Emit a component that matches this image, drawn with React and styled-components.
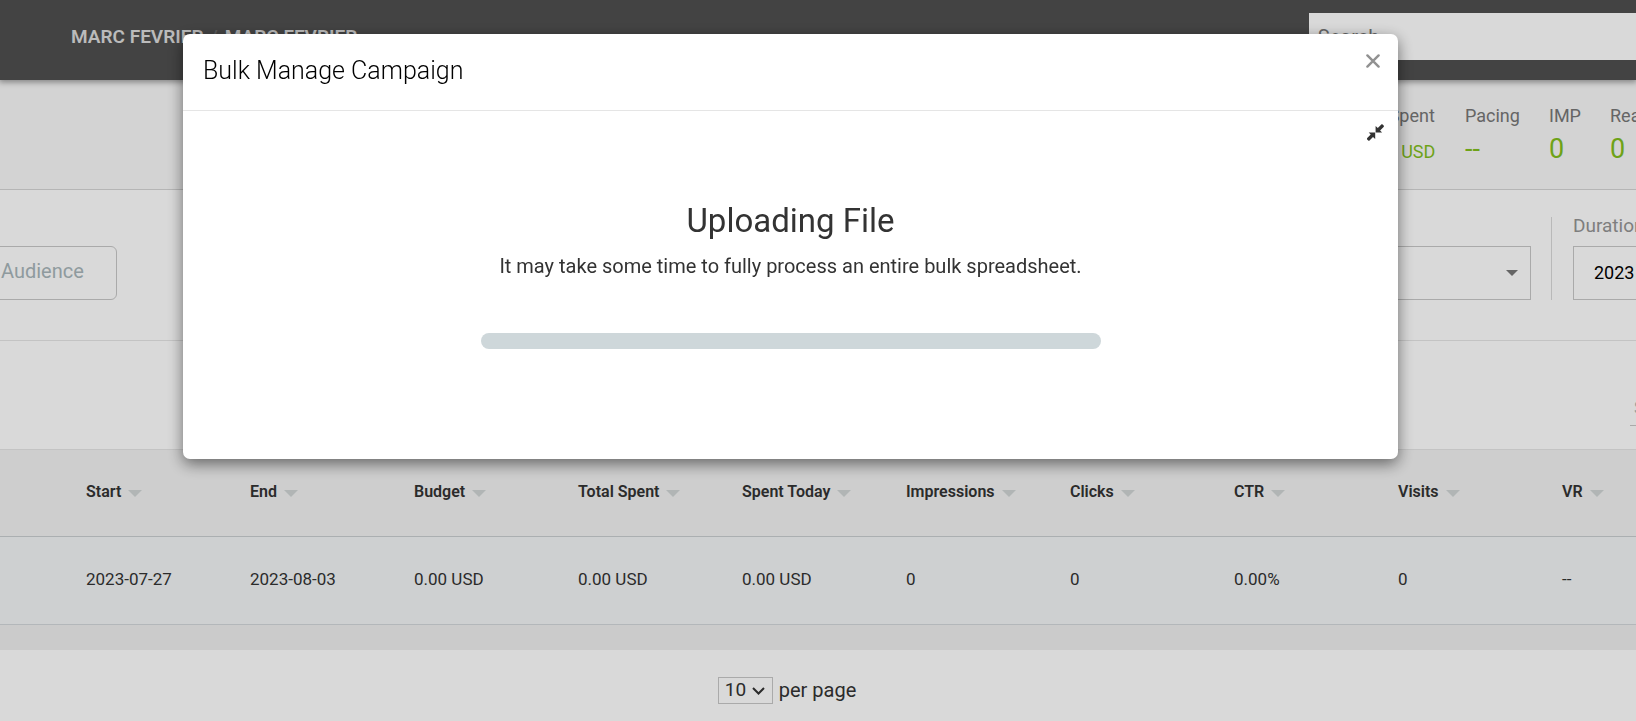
import { useState } from "react";
import styled, { createGlobalStyle } from "styled-components";

const GlobalStyle = createGlobalStyle`
  * {
    box-sizing: border-box;
  }

  body {
    margin: 0;
    background: #fff;
    color: #333;
    font-family: Roboto, "Liberation Sans", sans-serif;
    font-size: 20px;
    line-height: 24px;
  }

  button, input, select {
    font: inherit;
    color: inherit;
  }
`

const Page = styled.div`
  min-height: 100vh;
  overflow: hidden;
`

const TopBar = styled.header`
  display: flex;
  justify-content: space-between;
  align-items: flex-start;
  height: 80px;
  padding-top: 13px;
  position: relative;
  background: #4f4f4f;
  box-shadow: 0 1px 6px 1px rgba(0, 0, 0, 0.4);
`

const Breadcrumb = styled.nav`
  display: flex;
  gap: 7px;
  padding: 12px 0 0 71px;
  font-size: 19px;
  font-weight: 600;
  color: #6a6a6a;

  a {
    color: #dcdcdc;
    text-decoration: none;
  }
`

const TopSearch = styled.input`
  flex: 0 0 20%;
  height: 47px;
  padding: 0 9px;
  border: 0;
  border-radius: 0;
  background: #fff;

  &::placeholder {
    color: #777;
    opacity: 1;
  }
`

const StatsBar = styled.section`
  display: flex;
  justify-content: flex-end;
  height: 110px;
  padding-top: 24px;
  border-bottom: 1px solid #d5d5d5;
  background: #f8f8f8;
`

const Stat = styled.div`
  flex: 0 0 ${({ $width }) => $width}px;
  min-width: 0;
  white-space: nowrap;
`

const StatLabel = styled.div`
  font-size: 18px;
  color: #777;
`

const StatValue = styled.div`
  margin-top: 6px;
  font-size: 27px;
  line-height: 30px;
  color: #82bf1c;

  small {
    font-size: 18px;
  }
`

const Filters = styled.section`
  display: flex;
  align-items: flex-end;
  height: 151px;
  padding-bottom: 40px;
  border-bottom: 1px solid #e6e6e6;
`

const AudienceButton = styled.button`
  height: 54px;
  margin-left: -32px;
  padding: 0 32px 4px;
  border: 1px solid #c8c8c8;
  border-radius: 6px;
  background: #fff;
  color: #a8b6ba;
`

const FilterSelect = styled.div`
  width: 240px;
  margin-left: auto;
  position: relative;

  select {
    width: 100%;
    height: 54px;
    appearance: none;
    border: 1px solid #c8c8c8;
    border-radius: 0;
    background: #fff;
  }
`

const Caret = styled.span`
  display: inline-block;
  border: ${({ $size }) => $size}px solid transparent;
  border-top-color: ${({ $color }) => $color};
  border-bottom: 0;
`

const SelectCaret = styled(Caret)`
  position: absolute;
  right: 13px;
  top: 24px;
`

const Duration = styled.div`
  flex: none;
  width: 85px;
  margin-left: 20px;
  padding-left: 21px;
  border-left: 1px solid #dadada;
  white-space: nowrap;

  label {
    display: block;
    height: 29px;
    line-height: 18px;
    font-size: 19px;
    color: #959595;
  }

  input {
    display: block;
    width: 260px;
    height: 54px;
    padding: 0 20px 2px;
    border: 1px solid #c8c8c8;
    background: #fff;
    color: #000;
    font-size: 18px;
  }
`

const ListTools = styled.section`
  display: flex;
  justify-content: flex-end;
  align-items: flex-end;
  height: 109px;
  padding-bottom: 23px;
  border-bottom: 1px solid #e6e6e6;
`

const ListSearch = styled.input`
  flex: none;
  width: 200px;
  height: 36px;
  margin-right: -194px;
  padding: 0 4px;
  border: 0;
  border-bottom: 1px solid #c8c8c8;
  background: transparent;
  font-size: 18px;

  &::placeholder {
    color: #a8b6ba;
  }
`

const TableWrap = styled.div`
  overflow: hidden;
  padding-bottom: 25px;
  background: #efefef;
`

const Table = styled.table`
  width: 1706px;
  table-layout: fixed;
  border-collapse: collapse;
  text-align: left;

  th, td {
    padding: 0 0 2px 20px;
    white-space: nowrap;
  }

  th {
    height: 86px;
    font-size: 16px;
    font-weight: 600;
    background: #f2f2f2;
    border-bottom: 1px solid #c9ced0;
  }

  td {
    height: 88px;
    font-size: 17px;
    background: #f2f5f6;
    border-bottom: 1px solid #d3d8db;
  }

  th:first-child {
    width: 66px;
  }
`

const SortCaret = styled(Caret)`
  margin-left: 7px;
`

const Pagination = styled.label`
  display: flex;
  justify-content: center;
  align-items: center;
  gap: 6px;
  padding: 27px 62px 17px 0;
`

const PageSize = styled.span`
  position: relative;

  select {
    display: block;
    width: 55px;
    height: 27px;
    padding: 0 0 0 6px;
    appearance: none;
    border: 1px solid #c8c8c8;
    border-radius: 0;
    background: #fff;
    font-size: 19px;
  }

  svg {
    position: absolute;
    right: 8px;
    top: 10px;
    pointer-events: none;
  }
`

const Backdrop = styled.div`
  position: fixed;
  inset: 0;
  padding: 34px 238px 0 183px;
  background: rgba(0, 0, 0, 0.15);
`

const Dialog = styled.div`
  border-radius: 7px;
  background: #fff;
  box-shadow: 0 5px 15px rgba(0, 0, 0, 0.5);
`

const DialogHeader = styled.div`
  display: flex;
  justify-content: space-between;
  align-items: flex-start;
  height: 77px;
  padding: 20px 18px 0 20px;
  border-bottom: 1px solid #e5e5e5;

  h1 {
    margin: 0;
    font-size: 25px;
    line-height: 34px;
    font-weight: 300;
    color: #000;
  }
`

const IconButton = styled.button`
  display: block;
  padding: 0;
  border: 0;
  background: none;
  color: ${({ $color }) => $color};
  cursor: pointer;

  svg {
    display: block;
  }
`

const DialogBody = styled.div`
  display: flex;
  flex-direction: column;
  align-items: center;
  padding: 13px 14px 110px;
  text-align: center;

  ${IconButton} {
    align-self: flex-end;
  }

  h2 {
    margin: 60px 0 13px;
    font-size: 33px;
    line-height: 40px;
    font-weight: 400;
  }

  p {
    margin: 0 0 55px;
  }
`

const ProgressTrack = styled.div`
  width: 620px;
  max-width: 100%;
  height: 16px;
  border-radius: 8px;
  background: #ced7da;
  overflow: hidden;
`

const ProgressFill = styled.div`
  height: 100%;
  background: #82bf1c;
`

const stats = [
  { label: "Total Spent", value: "0.00", unit: "USD", width: 121 },
  { label: "Pacing", value: "--", width: 84 },
  { label: "IMP", value: "0", width: 61 },
  { label: "Reach", value: "0", width: 26 },
];

const columns = [
  { title: "Start", value: "2023-07-27" },
  { title: "End", value: "2023-08-03" },
  { title: "Budget", value: "0.00 USD" },
  { title: "Total Spent", value: "0.00 USD" },
  { title: "Spent Today", value: "0.00 USD" },
  { title: "Impressions", value: "0" },
  { title: "Clicks", value: "0" },
  { title: "CTR", value: "0.00%" },
  { title: "Visits", value: "0" },
  { title: "VR", value: "--" },
];

const CloseIcon = () => (
  <svg width="14" height="14" viewBox="0 0 14 14" stroke="currentColor" strokeWidth="2.4" strokeLinecap="round">
    <path d="M1.4 1.4 12.6 12.6M12.6 1.4 1.4 12.6" />
  </svg>
)

const CompressIcon = () => (
  <svg width="17" height="17" viewBox="0 0 17 17" fill="currentColor">
    <path d="M8.6 1.9v6.5h6.5l-2-2 3.5-3.5c.5-.5.5-.9 0-1.3l-1-1c-.5-.5-.9-.5-1.3 0l-3.5 3.5z" />
    <path d="M8.2 15.1V8.6H1.7l2 2-3.5 3.5c-.4.5-.4.9 0 1.3l1 1c.5.5.9.5 1.3 0l3.5-3.5z" />
  </svg>
)

const UploadDialog = ({ progress }) => (
  <Backdrop>
    <Dialog role="dialog" aria-modal="true" aria-labelledby="upload-title">
      <DialogHeader>
        <h1 id="upload-title">Bulk Manage Campaign</h1>
        <IconButton $color="#919191" aria-label="Close"><CloseIcon /></IconButton>
      </DialogHeader>
      <DialogBody>
        <IconButton $color="#333" aria-label="Minimize"><CompressIcon /></IconButton>
        <h2>Uploading File</h2>
        <p>It may take some time to fully process an entire bulk spreadsheet.</p>
        <ProgressTrack role="progressbar" aria-valuenow={progress}>
          <ProgressFill style={{ width: `${progress}%` }} />
        </ProgressTrack>
      </DialogBody>
    </Dialog>
  </Backdrop>
)

export default function App() {
  const [pageSize, setPageSize] = useState("10");

  return (
    <>
      <GlobalStyle />
      <Page>
        <TopBar>
          <Breadcrumb>
            <a href="#account">MARC FEVRIER</a>
            <span>/</span>
            <a href="#advertiser">MARC FEVRIER</a>
          </Breadcrumb>
          <TopSearch type="text" placeholder="Search" aria-label="Search" />
        </TopBar>

        <StatsBar>
          {stats.map(({ label, value, unit, width }) => (
            <Stat key={label} $width={width}>
              <StatLabel>{label}</StatLabel>
              <StatValue>{value}{unit && <small> {unit}</small>}</StatValue>
            </Stat>
          ))}
        </StatsBar>

        <Filters>
          <AudienceButton>Audience</AudienceButton>
          <FilterSelect>
            <select aria-label="Filter" />
            <SelectCaret $size={6} $color="#777" />
          </FilterSelect>
          <Duration>
            <label htmlFor="duration">Duration</label>
            <input id="duration" type="text" defaultValue="2023" />
          </Duration>
        </Filters>

        <ListTools>
          <ListSearch type="text" placeholder="Search" aria-label="Search campaigns" />
        </ListTools>

        <TableWrap>
          <Table>
            <thead>
              <tr>
                <th />
                {columns.map(({ title }) => (
                  <th key={title}>{title}<SortCaret $size={7} $color="#d0d5d5" /></th>
                ))}
              </tr>
            </thead>
            <tbody>
              <tr>
                <td />
                {columns.map(({ title, value }) => <td key={title}>{value}</td>)}
              </tr>
            </tbody>
          </Table>
        </TableWrap>

        <Pagination>
          <PageSize>
            <select value={pageSize} onChange={(e) => setPageSize(e.target.value)}>
              <option>10</option>
              <option>25</option>
              <option>50</option>
            </select>
            <svg width="13" height="8" viewBox="0 0 13 8" fill="none" stroke="#333" strokeWidth="2">
              <path d="M1 1l5.5 5.5L12 1" />
            </svg>
          </PageSize>
          per page
        </Pagination>
      </Page>
      <UploadDialog progress={0} />
    </>
  )
}
